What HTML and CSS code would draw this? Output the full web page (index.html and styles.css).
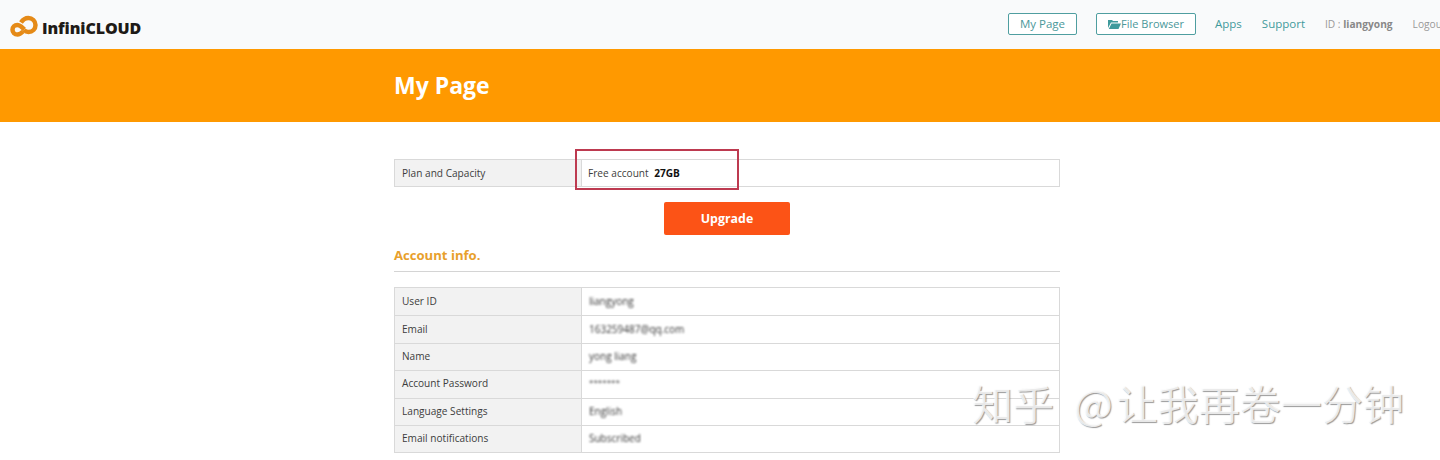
FILE: index.html
```html
<!DOCTYPE html>
<html lang="en">
<head>
<meta charset="utf-8">
<title>My Page</title>
<link rel="stylesheet" href="styles.css">
</head>
<body>
<header class="topbar">
  <a class="logo">
    <svg class="logo-mark" width="29" height="22" viewBox="0 0 29 22" aria-hidden="true">
      <path d="M13 16.500 C11 18.500 9 19.500 7.500 19.500 C4.600 19.500 2.500 17.300 2.500 14.700 C2.500 12 4.600 10 7.300 10 C10.500 10 12.500 13 14.500 14.500" fill="none" stroke="#e58a17" stroke-width="4.500"/>
      <path d="M11 7.500 C13 4.500 15.500 3 18.300 3 C22.300 3 25.500 6 25.500 10 C25.500 14 22.500 17 18.500 17 C16.500 17 15 16 14 15" fill="none" stroke="#e58a17" stroke-width="4.500"/>
    </svg>
    <span class="logo-text">InfiniCLOUD</span>
  </a>
  <nav class="nav">
    <a class="btn btn-page">My Page</a>
    <a class="btn btn-files">
      <svg class="folder" width="13" height="10" viewBox="0 0 13 10" aria-hidden="true">
        <path d="M0 9V1h4l1 1h5v1.500H3L0 9zM3.500 4.500H13L10.500 10H.8z" fill="#3f9a9c"/>
      </svg>File Browser</a>
    <a class="link link-apps">Apps</a>
    <a class="link link-support">Support</a>
    <span class="userid">ID : <b>liangyong</b></span>
    <a class="logout">Logout</a>
  </nav>
</header>

<section class="band">
  <h1 class="title">My Page</h1>
</section>

<main class="content">
  <div class="plan">
    <div class="row row-plan">
      <div class="label">Plan and Capacity</div>
      <div class="value">Free account <b class="size">27GB</b></div>
    </div>
    <div class="highlight"></div>
  </div>

  <div class="actions"><a class="upgrade">Upgrade</a></div>

  <h2 class="section">Account info.</h2>

  <div class="table">
    <div class="row"><div class="label">User ID</div><div class="value"><span class="blur">liangyong</span></div></div>
    <div class="row"><div class="label">Email</div><div class="value"><span class="blur">163259487@qq.com</span></div></div>
    <div class="row"><div class="label">Name</div><div class="value"><span class="blur">yong liang</span></div></div>
    <div class="row"><div class="label">Account Password</div><div class="value"><span class="blur small">*******</span></div></div>
    <div class="row"><div class="label">Language Settings</div><div class="value"><span class="blur">English</span></div></div>
    <div class="row"><div class="label">Email notifications</div><div class="value"><span class="blur">Subscribed</span></div></div>
  </div>
</main>

<div class="watermark">知乎<span class="wm-at">@</span>让我再卷一分钟</div>
</body>
</html>
```
FILE: styles.css
```css
* { box-sizing: border-box; }
html, body { margin: 0; padding: 0; }
body {
  position: relative;
  width: 1440px;
  height: 460px;
  overflow: hidden;
  background: #fff;
  font-family: "Open Sans", "Noto Sans", sans-serif;
  color: #333;
}

.topbar {
  display: flex;
  align-items: center;
  justify-content: space-between;
  height: 49px;
  padding-left: 10px;
  background: #f9fafb;
  overflow: hidden;
}
.logo { display: flex; align-items: center; gap: 3px; }
.logo-mark { display: block; margin-top: 3px; }
.logo-text {
  font-family: "Open Sans", sans-serif;
  font-weight: 800;
  font-size: 16px;
  letter-spacing: -0.100px;
  color: #1e1a17;
  margin-top: 6px;
}

.nav {
  display: flex;
  align-items: center;
  flex: none;
  width: 432px;
  margin-top: -2px;
  white-space: nowrap;
  overflow: hidden;
  font-size: 11.500px;
}
.nav > * { flex: none; }
.btn {
  display: flex;
  align-items: center;
  justify-content: center;
  height: 22px;
  border: 1px solid #4f9ea0;
  border-radius: 2px;
  color: #4b989a;
  background: #fff;
}
.btn-page { width: 69px; }
.btn-files { width: 100px; margin-left: 19px; font-size: 11px; }
.link { color: #3f9a9c; }
.link-apps { margin-left: 19px; }
.link-support { margin-left: 20px; }
.userid { margin-left: 20px; font-size: 10.200px; color: #999; }
.userid b { color: #888; }
.logout { margin-left: 20px; font-size: 10.200px; color: #999; }

.band {
  height: 73px;
  padding: 20px 0 0 394px;
  background: #ff9900;
}
.title {
  margin: 0;
  font-size: 23px;
  line-height: 32px;
  font-weight: 700;
  color: #fff;
}

.content {
  width: 666px;
  margin-left: 394px;
  padding-top: 37px;
}
.plan { position: relative; }
.highlight {
  position: absolute;
  left: 181px;
  top: -10px;
  width: 164px;
  height: 41px;
  border: 2px solid #bd3a50;
}
.row {
  display: grid;
  grid-template-columns: 187px 1fr;
  height: 27.400px;
  font-size: 10.100px;
  color: #3d3d3d;
}
.row + .row { border-top: 1px solid #d9d9d9; }
.row-plan { height: 28px; border: 1px solid #d9d9d9; }
.row-plan .value { padding-left: 6px; }
.label {
  display: flex;
  align-items: center;
  padding: 0 0 2px 7px;
  background: #f2f2f2;
  border-right: 1px solid #d9d9d9;
}
.row-plan .label { padding-bottom: 0; }
.value {
  display: flex;
  align-items: center;
  padding: 0 0 2px 7px;
  background: #fff;
  white-space: pre;
}
.row-plan .value { padding-bottom: 0; }
.size { margin-left: 3px; color: #111; font-weight: 700; }

.actions { display: flex; justify-content: center; padding-top: 15px; }
.upgrade {
  display: flex;
  align-items: center;
  justify-content: center;
  width: 126px;
  height: 33px;
  padding-bottom: 1px;
  border-radius: 2px;
  background: #fc5316;
  color: #fff;
  font-size: 12.400px;
  font-weight: 700;
}

.section {
  margin: 12px 0 0;
  height: 25px;
  border-bottom: 1px solid #d4d4d4;
  font-size: 13.100px;
  line-height: 16px;
  font-weight: 700;
  color: #e8a02c;
}

.table {
  margin-top: 15px;
  border: 1px solid #d9d9d9;
}
.blur { display: block; filter: blur(0.9px); color: #333; font-size: 10px; }
.blur.small { font-size: 8px; margin-top: -4px; }

.watermark {
  position: absolute;
  left: 972px;
  top: 375px;
  font-family: "Noto Sans CJK SC", sans-serif;
  font-size: 41px;
  line-height: 54px;
  white-space: nowrap;
  color: rgba(255, 255, 255, 0.8);
  text-shadow: 1px 1px 1px rgba(120, 120, 120, 0.75);
}
.wm-at { margin: 0 4px 0 20px; }
```
